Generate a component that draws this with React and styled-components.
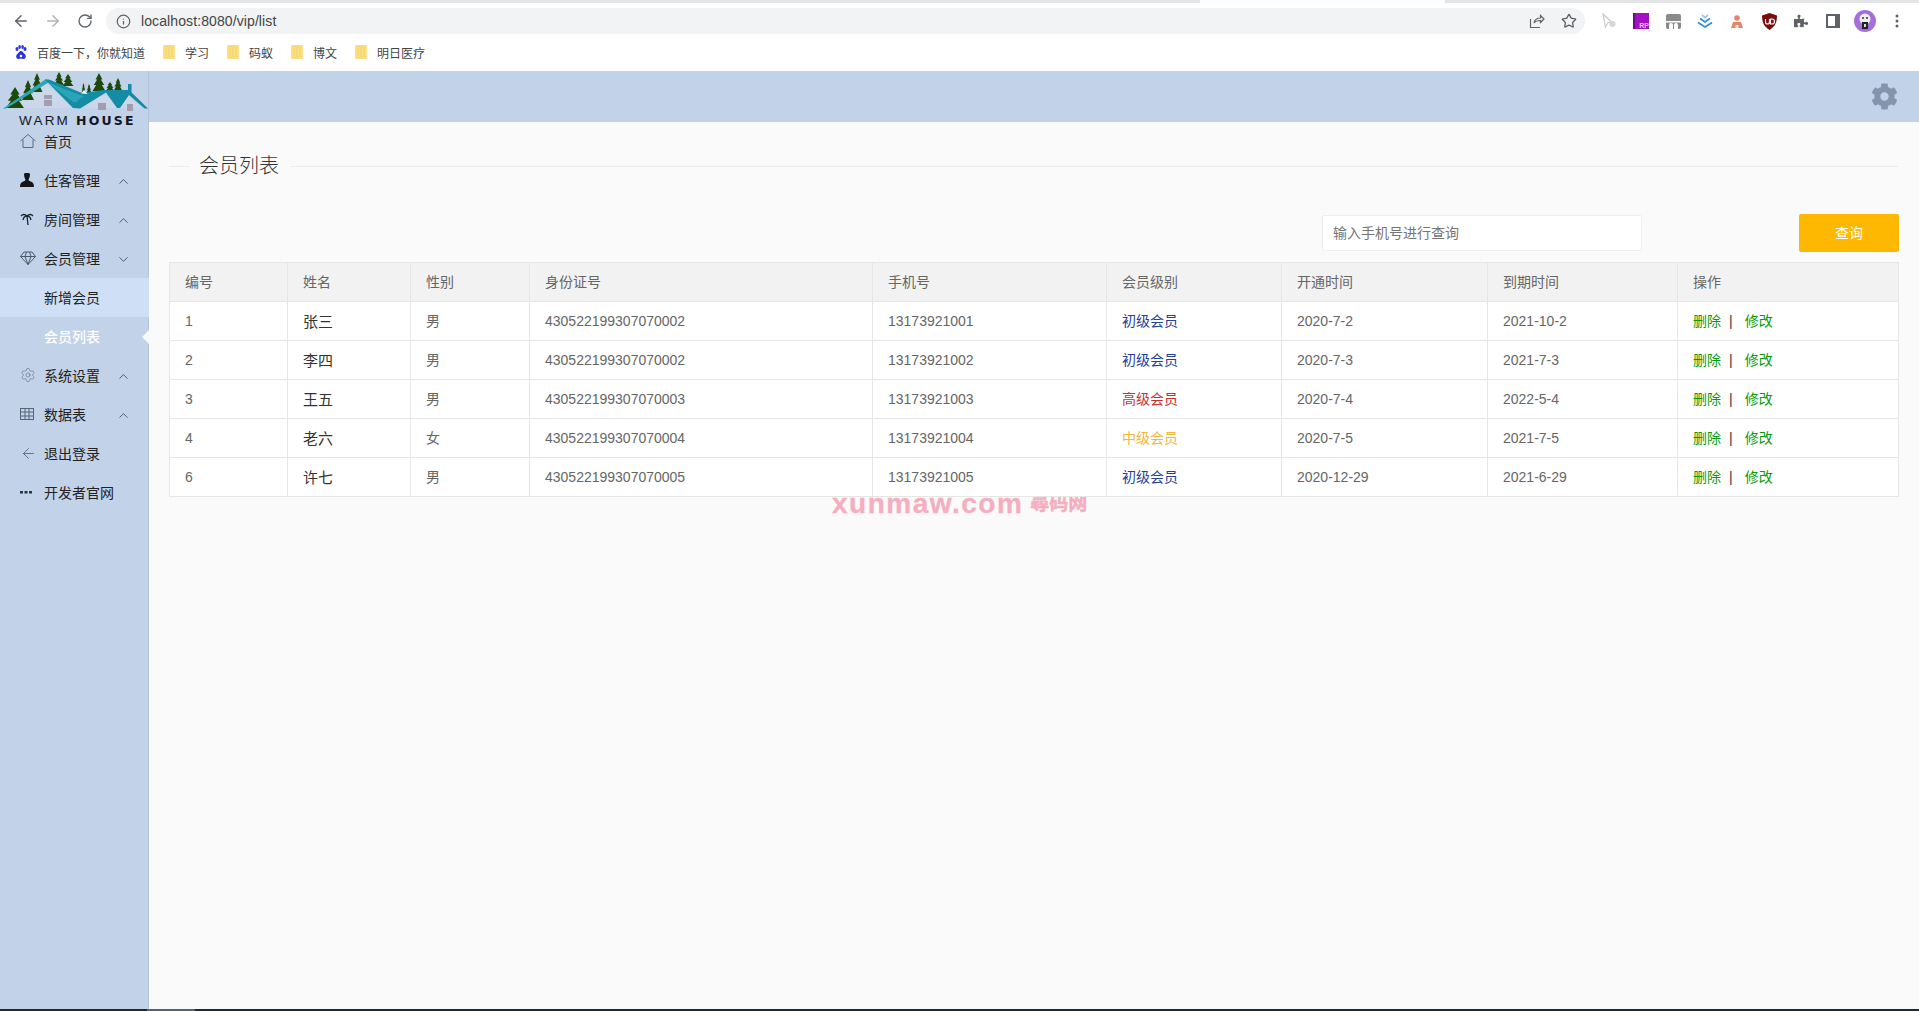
import React from 'react';
import styled, { createGlobalStyle } from 'styled-components';
import { ArrowLeft, ArrowRight, RotateCw, Info, Star, Settings, ChevronUp, ChevronDown } from 'lucide-react';
import { FaCog, FaPuzzlePiece } from 'react-icons/fa';

const Global = createGlobalStyle`
  html, body { margin: 0; padding: 0; background: #fafafa; }
  * { box-sizing: border-box; }
  body { font-family: "Liberation Sans", "Noto Sans CJK SC", sans-serif; font-size: 14px; color: #666; }
`;

const Page = styled.div`
  width: 1919px; height: 1011px; overflow: hidden; display: flex; flex-direction: column; position: relative;
`;

const TabEdge = styled.div`
  height: 3px; display: flex; flex: none; background: #e3e4e6;
`;
const TabGap = styled.div`
  width: 245px; margin-left: 1200px; background: #fdfdfd;
`;
const Toolbar = styled.div`
  height: 32px; flex: none; background: #fff; display: flex; align-items: center; padding: 4px 0 0 5px;
`;
const NavButton = styled.span`
  width: 32px; height: 24px; flex: none; display: flex; align-items: center; justify-content: center;
  color: ${p => (p.$dim ? '#b2b4b7' : '#5f6368')};
`;
const AddressBar = styled.div`
  margin-left: 5px; width: 1479px; height: 26px; border-radius: 13px; background: #f1f3f4; flex: none;
  display: flex; align-items: center; padding-left: 10px; color: #5f6368;
`;
const Url = styled.span`
  margin-left: 10px; color: #444; font-size: 14px; letter-spacing: .1px;
`;
const AddressTools = styled.div`
  margin-left: auto; display: flex; align-items: center; gap: 16px; padding-right: 8px; color: #5f6368;
`;
const Extensions = styled.div`
  display: flex; align-items: center; margin-left: 8px;
`;
const Extension = styled.span`
  width: 32px; height: 24px; flex: none; display: flex; align-items: center; justify-content: center; color: #5f6368;
`;
const RpBadge = styled.span`
  width: 16px; height: 16px; background: #a012c4; color: #fbd; font-size: 7px; font-weight: 700;
  display: flex; align-items: flex-end; justify-content: flex-end; border-left: 2px solid #6a0a90;
`;
const Avatar = styled.span`
  width: 22px; height: 22px; border-radius: 50%; background: #a46fd6; display: flex; align-items: center; justify-content: center;
`;
const Bookmarks = styled.div`
  height: 36px; flex: none; background: #fff; display: flex; align-items: center; padding: 0 0 2px 14px; font-size: 12px; color: #444;
`;
const Bookmark = styled.span`
  display: flex; align-items: center; gap: ${p => (p.$gap || 10)}px; margin-right: 18px;
`;

const Body = styled.div`
  flex: 1; min-height: 0; display: flex;
`;
const Sidebar = styled.aside`
  width: 149px; flex: none; background: #c2d2e9; box-shadow: inset -1px 0 0 #b4c4dc;
`;
const LogoBlock = styled.div`
  height: 50.5px; position: relative; z-index: 1;
`;
const LogoArt = styled.svg`
  display: block; width: 150px; height: 44px;
`;
const LogoText = styled.div`
  padding-left: 19px; line-height: 11px; font-size: 13.5px; letter-spacing: 2.2px; color: #15171c; white-space: nowrap;
`;
const LogoStrong = styled.b`
  font-weight: 700; font-family: "DejaVu Sans", sans-serif; font-size: 12.5px;
`;
const MenuItem = styled.div`
  height: 39px; display: flex; align-items: center; padding-left: 20px; color: ${p => (p.$active ? '#fff' : '#222')};
  background: ${p => (p.$hover ? '#cfdff6' : 'transparent')}; position: relative; font-weight: ${p => (p.$active ? 500 : 400)};
`;
const MenuIcon = styled.span`
  width: 24px; flex: none; display: flex; align-items: center;
`;
const SubIndent = styled.span`
  width: 24px; flex: none;
`;
const Chevron = styled.span`
  margin: 2px 18px 0 auto; display: flex; color: #3f4c5c;
`;
const ActiveArrow = styled.span`
  position: absolute; right: 0; top: 13px; border: 7px solid transparent; border-left: 0; border-right-color: #f6fafd;
`;

const Main = styled.main`
  flex: 1; min-width: 0; display: flex; flex-direction: column;
`;
const Header = styled.header`
  height: 51px; flex: none; background: #c2d2e9; display: flex; align-items: center; justify-content: flex-end;
  padding-right: 21px; color: #8394ad; box-shadow: 0 1px 0 #d7e1ee;
`;
const Content = styled.div`
  flex: 1; min-height: 0; padding: 32px 21px 0 20px; background: #fafafa;
`;
const TitleRow = styled.div`
  height: 24px; display: flex; align-items: center;
`;
const Rule = styled.span`
  height: 1px; background: #ececec; flex: ${p => (p.$grow ? '1' : '0 0 21px')};
`;
const Title = styled.h1`
  margin: 0 11px 0 9px; font-size: 20px; font-weight: 300; color: #333; line-height: 24px;
`;
const SearchRow = styled.form`
  margin: 36px -1px 0 0; height: 38px; display: flex; align-items: center; justify-content: flex-end;
`;
const SearchInput = styled.input`
  width: 320px; height: 36px; border: 1px solid #efefef; border-radius: 2px; background: #fff; padding: 0 10px;
  font: inherit; margin-right: 157px; outline: none;
  &::placeholder { color: #757575; opacity: 1; }
`;
const SearchButton = styled.button`
  width: 100px; height: 38px; border: 0; border-radius: 2px; background: #ffb800; color: #fff; font: inherit; padding: 0 0 2px;
`;
const Table = styled.table`
  margin-top: 10px; width: 1729px; table-layout: fixed; border-collapse: collapse; background: #fff;
  position: relative; z-index: 1;
`;
const Col = styled.col`
  width: ${p => p.$w}px;
`;
const Th = styled.th`
  height: 39px; padding: 0 15px 2px; background: #f2f2f2; border: 1px solid #e6e6e6; text-align: left; font-weight: 400; color: #666;
`;
const Td = styled.td`
  height: 39px; padding: 0 15px ${p => (p.$cjk ? '2px' : '0')}; border: 1px solid #e6e6e6; color: #666;
`;
const Name = styled.span`
  font-size: 15px; color: #333;
`;
const Level = styled.span`
  color: ${p => p.$color};
`;
const ActionLink = styled.a`
  color: #0a9a0a; text-decoration: none;
`;
const Pipe = styled.span`
  color: #333; margin: 0 12px 0 8px;
`;
const Watermark = styled.div`
  position: absolute; left: 832px; top: 489px; color: #f4aec0; font-weight: 700; font-size: 28px; letter-spacing: 1.5px;
  white-space: nowrap; line-height: 30px; display: flex; align-items: center; gap: 7px; -webkit-text-stroke: .3px #f4aec0;
`;
const WatermarkCjk = styled.span`
  font-size: 19px; letter-spacing: 0; -webkit-text-stroke: .5px #f4aec0;
`;
const BottomEdge = styled.div`
  height: 2px; flex: none; background: #1c2a33; display: flex;
`;
const BottomGap = styled.span`
  margin-left: 147px; width: 48px; background: #55646c;
`;

const S = { width: 16, height: 16, viewBox: '0 0 16 16', fill: 'none', stroke: 'currentColor' };

const Paw = () => (
  <svg width="14" height="15" viewBox="0 0 14 15" fill="#2932e1">
    <ellipse cx="3" cy="4" rx="1.5" ry="2" /><ellipse cx="11" cy="4" rx="1.5" ry="2" />
    <ellipse cx="5.6" cy="2" rx="1.3" ry="1.9" /><ellipse cx="8.6" cy="2" rx="1.3" ry="1.9" />
    <path d="M7 6c-2 0-2 2-3.6 3C1.600 10.200 1.800 14 4.500 14c1 0 1.500-.4 2.500-.4s1.500.4 2.500.4c2.700 0 2.900-3.800 1.100-5C9 8 9 6 7 6z" />
    <circle cx="7" cy="11" r="1.3" fill="#fff" />
  </svg>
);
const Folder = () => (
  <svg width="12" height="14" viewBox="0 0 12 14">
    <rect width="12" height="14" rx="1" fill="#fbdf87" />
    <path d="M3 1v12M6 1v12M9 1v12" stroke="#f5cf68" strokeWidth="1" />
  </svg>
);
const Share = () => (
  <svg {...S} strokeWidth="1.200"><path d="M1.500 6v8.500H11M5 10c.5-3 3-5 6.500-5V2.500L15 6l-3.500 3.500V7.500C9 7.500 6.500 8 5 10z" /></svg>
);
const Cursor = () => (
  <svg width="16" height="16" viewBox="0 0 16 16" fill="#fff" stroke="#c8cacc" strokeWidth="1.200"><path d="M2 1l9 8.500H7l-2.500 4.500z" /><circle cx="11.500" cy="11" r="3" fill="#d6d8da" stroke="none" /></svg>
);
const StoreIcon = () => (
  <svg width="15" height="15" viewBox="0 0 15 15"><rect width="15" height="15" rx="2" fill="#8a8a8a" /><rect y="7" width="15" height="1.500" fill="#fff" /><path d="M3 15V11a2 2 0 0 1 4 0v4zM8 15V11a2 2 0 0 1 4 0v4z" fill="#fff" /></svg>
);
const BlueIcon = () => (
  <svg width="16" height="16" viewBox="0 0 16 16" fill="none" stroke="#2f8fe8" strokeWidth="1.800"><path d="M5 2l3 2.500L11 2" stroke="#9cc8f0" /><path d="M3 5.500l5 3.500 5-3.500M1 9.500L8 14l7-4.500" /></svg>
);
const RedIcon = () => (
  <svg width="14" height="15" viewBox="0 0 14 15" fill="#e4866c"><circle cx="7" cy="4" r="2.800" /><path d="M1 14l2-6h8l2 6z" /><path d="M5.500 14v-3h3v3z" fill="#fbe3dc" /></svg>
);
const UBlock = () => (
  <svg width="15" height="17" viewBox="0 0 15 17"><path d="M7.500 0L15 2.500c0 6-1.500 11-7.500 14.500C1.500 13.500 0 8.500 0 2.500z" fill="#7b0b0b" /><path d="M3.500 6v3a2 2 0 0 0 4 0V6M8.500 6v5H10a2.500 2.500 0 0 0 0-5z" fill="none" stroke="#fff" strokeWidth="1.200" /></svg>
);
const PanelIcon = () => (
  <svg width="14" height="14" viewBox="0 0 14 14"><rect x="1" y="1" width="12" height="12" fill="#fff" stroke="#5f6368" strokeWidth="2" /><rect x="9" y="1" width="4" height="12" fill="#5f6368" /></svg>
);
const Face = () => (
  <svg width="14" height="16" viewBox="0 0 14 16"><circle cx="7" cy="6" r="5.500" fill="#eee" /><circle cx="5" cy="5" r="1" fill="#333" /><circle cx="9" cy="5" r="1" fill="#333" /><rect x="4" y="9" width="6" height="7" fill="#222" /><rect x="6" y="11" width="2" height="3" fill="#ddd" /></svg>
);
const Dots = () => (
  <svg width="4" height="14" viewBox="0 0 4 14" fill="#5f6368"><circle cx="2" cy="2" r="1.500" /><circle cx="2" cy="7" r="1.500" /><circle cx="2" cy="12" r="1.500" /></svg>
);

const Tree = ({ x, b, t, w }) => {
  const h = b - t;
  const a = t + h * 0.36;
  const c = t + h * 0.66;
  return (
    <path fill="#1c4a0d" d={`M${x} ${t} L${x + w * 0.26} ${a} L${x + w * 0.14} ${a} L${x + w * 0.4} ${c} L${x + w * 0.22} ${c} L${x + w * 0.5} ${b} L${x - w * 0.5} ${b} L${x - w * 0.22} ${c} L${x - w * 0.4} ${c} L${x - w * 0.14} ${a} L${x - w * 0.26} ${a} Z`} />
  );
};
const Logo = () => (
  <LogoArt viewBox="0 0 150 44">
    <path d="M6 37L46 12 72 37z M84 37l20-14 14 14z M120 37l8-12 13 12z" fill="#cbd8ea" />
    <Tree x={15} b={37} t={16} w={18} />
    <Tree x={28} b={29} t={9} w={12} />
    <Tree x={37} b={21} t={2} w={11} />
    <Tree x={59} b={14} t={1} w={10} />
    <Tree x={68} b={15} t={3} w={11} />
    <Tree x={83.500} b={22} t={12} w={4} />
    <Tree x={89} b={22} t={13} w={5} />
    <Tree x={99} b={20} t={2} w={13} />
    <Tree x={110} b={20} t={11} w={9} />
    <Tree x={118} b={20} t={7} w={9} />
    <path d="M3 37.500L46 8l2.500 3.500L6 37.500z" fill="#2da7b4" />
    <path d="M45 8.500h4L82 22l22-3 25 0 19 18.500h-3.500L129 24l-9 13h-3L106 21.500 80 37.500 73 37z" fill="#148ca3" />
    <path d="M47 11L80 24 84 25 76 31 73 31z" fill="#2aa4b8" />
    <path d="M84 19l-3 3.500 6.500.5z" fill="#eef4f8" />
    <path d="M128 13h3.500v9H128z" fill="#148ca3" />
    <g fill="#a39db4">
      <rect x="44" y="24" width="8" height="4" />
      <rect x="44" y="29" width="8" height="6" />
      <rect x="98" y="32" width="8" height="7" />
      <rect x="127" y="33" width="6" height="7" />
    </g>
  </LogoArt>
);

const HomeIcon = () => <svg {...S} stroke="#5d6c7c" strokeWidth="1"><path d="M.5 8L8 1.500 15.500 8M3 6.500V14.500H13V6.500" /></svg>;
const UserIcon = () => <svg width="14" height="14" viewBox="0 0 14 14" fill="#14141a"><path d="M4 1c0-.5 1-1 3-1s3 .5 3 1c0 3-1 4.500-1.500 6 .5 1 2.500 1.500 4 2.500.6.500 1.500 2 1.500 4.500H0c0-2.500.9-4 1.500-4.500C3 8.500 5 8 5.500 7 5 5.500 4 4 4 1z" /></svg>;
const PalmIcon = () => <svg width="14" height="12" viewBox="0 0 14 12" fill="none" stroke="#1c2a30" strokeWidth="1.300"><path d="M7 3L8 12M7 3C5 1 2.500 1 1 3M7 3C9 1 11.500 1 13 3M7 3C5 3 3.500 4.500 3 7M7 3C9 3 10.500 4.500 11 7" /></svg>;
const GemIcon = () => <svg {...S} stroke="#4c5a6a" strokeWidth="1"><path d="M4 2h8l3.500 4.500L8 14.500.5 6.500zM.5 6.500h15M5 6.500L8 14.500 11 6.500M5 6.500L6.500 2M11 6.500L9.500 2" /></svg>;
const TableIcon = () => <svg width="14" height="12" viewBox="0 0 14 12" fill="none" stroke="#566676" strokeWidth="1"><rect x=".5" y=".5" width="13" height="11" /><path d="M.5 4h13M.5 8h13M5 .5v11M9 .5v11" /></svg>;
const DotsIcon = () => <svg width="12" height="4" viewBox="0 0 12 4" fill="#2a3340"><rect x="0" y="1" width="3" height="2.500" /><rect x="4.500" y="1" width="3" height="2.500" /><rect x="9" y="1" width="3" height="2.500" /></svg>;

const menu = [
  { label: '首页', icon: <HomeIcon /> },
  { label: '住客管理', icon: <UserIcon />, chev: 'up' },
  { label: '房间管理', icon: <PalmIcon />, chev: 'up' },
  { label: '会员管理', icon: <GemIcon />, chev: 'down' },
  { label: '新增会员', sub: true, hover: true },
  { label: '会员列表', sub: true, active: true },
  { label: '系统设置', icon: <Settings size={16} strokeWidth={1} color="#66768a" />, chev: 'up' },
  { label: '数据表', icon: <TableIcon />, chev: 'up' },
  { label: '退出登录', icon: <ArrowLeft size={17} strokeWidth={1} color="#40505f" /> },
  { label: '开发者官网', icon: <DotsIcon /> },
];

const columns = [
  ['编号', 118], ['姓名', 123], ['性别', 119], ['身份证号', 343], ['手机号', 234],
  ['会员级别', 175], ['开通时间', 206], ['到期时间', 190], ['操作', 221],
];
const BLUE = '#23409a', RED = '#c9302c', YELLOW = '#f3b63c';
const rows = [
  ['1', '张三', '男', '430522199307070002', '13173921001', '初级会员', BLUE, '2020-7-2', '2021-10-2'],
  ['2', '李四', '男', '430522199307070002', '13173921002', '初级会员', BLUE, '2020-7-3', '2021-7-3'],
  ['3', '王五', '男', '430522199307070003', '13173921003', '高级会员', RED, '2020-7-4', '2022-5-4'],
  ['4', '老六', '女', '430522199307070004', '13173921004', '中级会员', YELLOW, '2020-7-5', '2021-7-5'],
  ['6', '许七', '男', '430522199307070005', '13173921005', '初级会员', BLUE, '2020-12-29', '2021-6-29'],
];

export default function App() {
  return (
    <Page>
      <Global />
      <TabEdge><TabGap /></TabEdge>
      <Toolbar>
        <NavButton><ArrowLeft size={18} strokeWidth={2} /></NavButton>
        <NavButton $dim><ArrowRight size={18} strokeWidth={2} /></NavButton>
        <NavButton><RotateCw size={16} strokeWidth={2} /></NavButton>
        <AddressBar>
          <Info size={15} strokeWidth={2} />
          <Url>localhost:8080/vip/list</Url>
          <AddressTools>
            <Share />
            <Star size={16} strokeWidth={2} />
          </AddressTools>
        </AddressBar>
        <Extensions>
          <Extension><Cursor /></Extension>
          <Extension><RpBadge>RP</RpBadge></Extension>
          <Extension><StoreIcon /></Extension>
          <Extension><BlueIcon /></Extension>
          <Extension><RedIcon /></Extension>
          <Extension><UBlock /></Extension>
          <Extension><FaPuzzlePiece size={14} /></Extension>
          <Extension><PanelIcon /></Extension>
          <Extension><Avatar><Face /></Avatar></Extension>
          <Extension><Dots /></Extension>
        </Extensions>
      </Toolbar>
      <Bookmarks>
        <Bookmark $gap={9}><Paw />百度一下，你就知道</Bookmark>
        <Bookmark><Folder />学习</Bookmark>
        <Bookmark><Folder />码蚁</Bookmark>
        <Bookmark><Folder />博文</Bookmark>
        <Bookmark><Folder />明日医疗</Bookmark>
      </Bookmarks>
      <Body>
        <Sidebar>
          <LogoBlock>
            <Logo />
            <LogoText>WARM <LogoStrong>HOUSE</LogoStrong></LogoText>
          </LogoBlock>
          {menu.map(m => (
            <MenuItem key={m.label} $hover={m.hover} $active={m.active}>
              {m.sub ? <SubIndent /> : <MenuIcon>{m.icon}</MenuIcon>}
              {m.label}
              {m.chev && (
                <Chevron>{m.chev === 'up' ? <ChevronUp size={15} strokeWidth={1.400} /> : <ChevronDown size={15} strokeWidth={1.400} />}</Chevron>
              )}
              {m.active && <ActiveArrow />}
            </MenuItem>
          ))}
        </Sidebar>
        <Main>
          <Header><FaCog size={27} /></Header>
          <Content>
            <TitleRow>
              <Rule />
              <Title>会员列表</Title>
              <Rule $grow />
            </TitleRow>
            <SearchRow onSubmit={e => e.preventDefault()}>
              <SearchInput placeholder="输入手机号进行查询" />
              <SearchButton>查询</SearchButton>
            </SearchRow>
            <Table>
              <colgroup>{columns.map(([h, w]) => <Col key={h} $w={w} />)}</colgroup>
              <thead><tr>{columns.map(([h]) => <Th key={h}>{h}</Th>)}</tr></thead>
              <tbody>
                {rows.map(r => (
                  <tr key={r[0]}>
                    <Td>{r[0]}</Td>
                    <Td $cjk><Name>{r[1]}</Name></Td>
                    <Td $cjk>{r[2]}</Td>
                    <Td>{r[3]}</Td>
                    <Td>{r[4]}</Td>
                    <Td $cjk><Level $color={r[6]}>{r[5]}</Level></Td>
                    <Td>{r[7]}</Td>
                    <Td>{r[8]}</Td>
                    <Td $cjk><ActionLink>删除</ActionLink><Pipe>|</Pipe><ActionLink>修改</ActionLink></Td>
                  </tr>
                ))}
              </tbody>
            </Table>
          </Content>
        </Main>
      </Body>
      <BottomEdge><BottomGap /></BottomEdge>
      <Watermark>xunmaw.com <WatermarkCjk>尋码网</WatermarkCjk></Watermark>
    </Page>
  );
}
